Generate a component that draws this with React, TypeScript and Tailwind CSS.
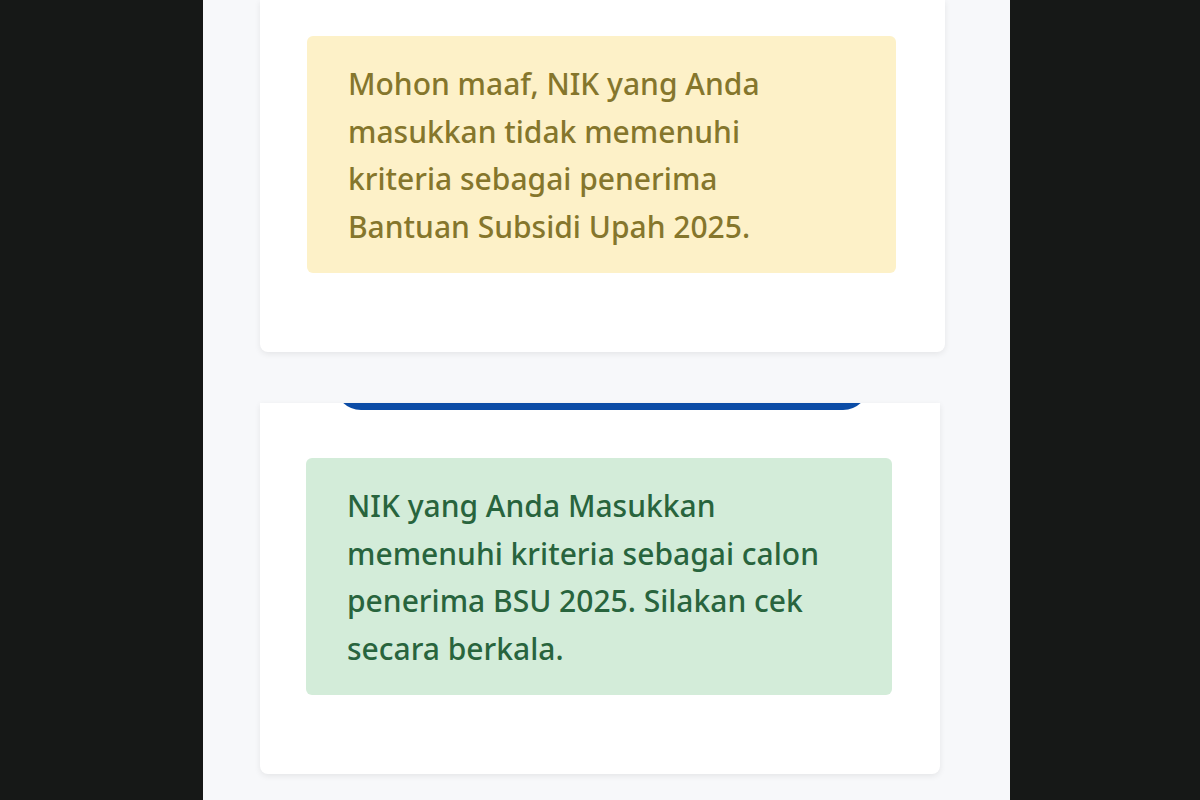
import React from 'react';

const font = { fontFamily: '"Noto Sans", "Open Sans", Arial, sans-serif' };

function Alert({ tone, lines }: { tone: 'warning' | 'success'; lines: string[] }) {
  const cls =
    tone === 'warning'
      ? 'bg-[#fdf1c8] text-[#85762c]'
      : 'bg-[#d3ecd9] text-[#28643d]';
  return (
    <div className={`${cls} rounded-[6px] px-[41px] pt-[24px] pb-[23px] text-[30px] font-medium leading-[47.5px]`}>
      {lines.map((l, i) => (
        <div key={i} className="whitespace-nowrap">
          {l}
        </div>
      ))}
    </div>
  );
}

export default function App() {
  return (
    <div className="h-[800px] overflow-hidden bg-[#161817] pl-[203px]" style={font}>
      <div className="h-full w-[807px] bg-[#f7f8fa] pl-[57px]">
        {/* ineligible result */}
        <div className="w-[685px] rounded-b-[8px] bg-white pt-[36px] pb-[79px] pl-[47px] pr-[49px] shadow-[0_2px_6px_rgba(0,0,0,0.08)]">
          <Alert
            tone="warning"
            lines={[
              'Mohon maaf, NIK yang Anda',
              'masukkan tidak memenuhi',
              'kriteria sebagai penerima',
              'Bantuan Subsidi Upah 2025.',
            ]}
          />
        </div>

        {/* eligible result */}
        <div className="mt-[51px] w-[680px] rounded-b-[8px] bg-white pb-[79px] shadow-[0_2px_6px_rgba(0,0,0,0.08)]">
          <div className="flex h-[7px] items-end overflow-hidden pl-[75px] pr-[71px]">
            <div className="h-[40px] w-full shrink-0 rounded-b-[26px] bg-[#0b4ca6]" />
          </div>
          <div className="mt-[48px] pl-[46px] pr-[48px]">
            <Alert
              tone="success"
              lines={[
                'NIK yang Anda Masukkan',
                'memenuhi kriteria sebagai calon',
                'penerima BSU 2025. Silakan cek',
                'secara berkala.',
              ]}
            />
          </div>
        </div>
      </div>
    </div>
  );
}
